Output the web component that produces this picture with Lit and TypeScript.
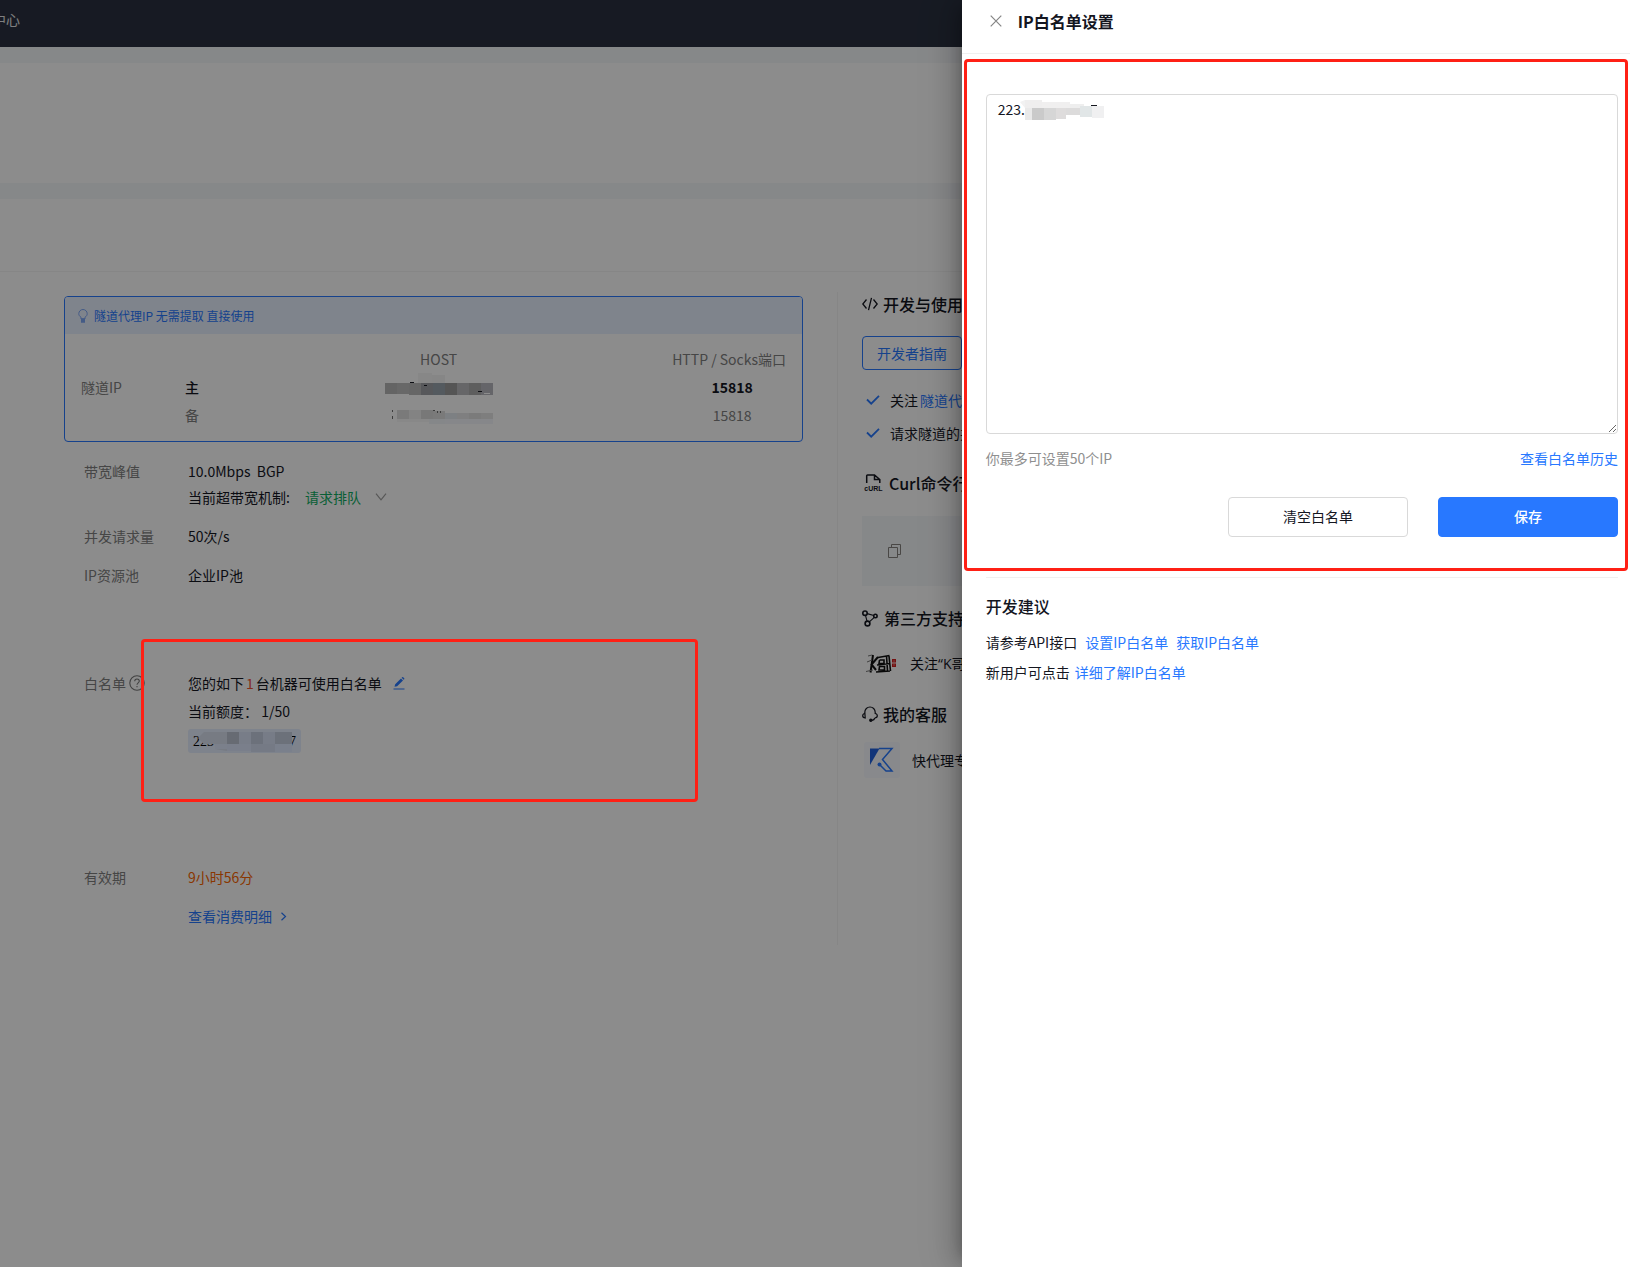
import { LitElement, html, css, svg } from "lit";
import { customElement, state } from "lit/decorators.js";

type Block = [x: number, y: number, w: number, h: number, fill: string];

const blocks = (list: Block[]) =>
  list.map(([x, y, w, h, fill]) => svg`<rect x=${x} y=${y} width=${w} height=${h} fill=${fill}></rect>`);

const PRIMARY_HOST: Block[] = [
  [33, 0, 14, 10, "#878787"],
  [47, 2, 13, 8, "#868686"],
  [0, 10, 12, 11, "#646464"],
  [12, 10, 12, 11, "#686868"],
  [24, 10, 12, 12, "#666666"],
  [36, 10, 12, 12, "#57585b"],
  [48, 10, 12, 12, "#545a5f"],
  [60, 10, 12, 12, "#555555"],
  [72, 10, 12, 12, "#666668"],
  [84, 10, 12, 12, "#5e5e5e"],
  [96, 10, 12, 12, "#656569"],
  [25, 9, 4, 1, "#0c0d12"],
  [39, 12, 3, 1, "#0c0d12"],
  [93, 18, 4, 1, "#0c0d12"],
  [99, 20, 6, 1, "#8c8c8c"],
];

const BACKUP_HOST: Block[] = [
  [7, 9, 1, 2, "#3c3c3c"],
  [7, 15, 1, 3, "#3c3c3c"],
  [12, 9, 12, 9, "#7a7a7a"],
  [24, 9, 12, 9, "#838383"],
  [36, 9, 12, 9, "#787878"],
  [48, 10, 12, 9, "#7a7a7a"],
  [12, 18, 36, 3, "#888888"],
  [60, 12, 12, 6, "#7d8083"],
  [72, 12, 12, 6, "#7f7f80"],
  [84, 12, 12, 6, "#7b7b7b"],
  [96, 12, 12, 6, "#7e7e7e"],
  [44, 18, 20, 5, "#858789"],
  [60, 18, 48, 5, "#86878a"],
  [48, 9, 2, 1, "#3c3c3c"],
  [52, 10, 1, 2, "#3c3c3c"],
  [55, 10, 1, 2, "#3c3c3c"],
];

const CHIP_MASK: Block[] = [
  [16, 3, 23, 12, "#777b83"],
  [39, 3, 12, 12, "#676b73"],
  [51, 3, 12, 12, "#787d88"],
  [63, 3, 12, 12, "#6c717b"],
  [75, 3, 12, 12, "#777c87"],
  [87, 3, 17, 12, "#6c717a"],
  [27, 15, 12, 5, "#7b808b"],
  [39, 15, 24, 7, "#7a7f8b"],
  [63, 15, 24, 8, "#757a85"],
  [87, 15, 17, 8, "#7a808c"],
];

const INPUT_MASK: Block[] = [
  [5, 0, 17, 8, "#efeeee"],
  [22, 2, 28, 6, "#f0efef"],
  [50, 4, 14, 4, "#eeeeee"],
  [5, 8, 7, 12, "#e9e9e9"],
  [12, 8, 12, 12, "#cacaca"],
  [24, 8, 12, 12, "#d6d6d6"],
  [36, 8, 10, 11, "#dedcdc"],
  [46, 8, 14, 7, "#dcdbdb"],
  [60, 6, 12, 11, "#e1e6e7"],
  [72, 6, 12, 12, "#f0f0f1"],
  [71, 5, 6, 1, "#15171f"],
];

@customElement("app-root")
export class AppRoot extends LitElement {
  @state() private whitelist = "223.";

  static styles = css`
    :host {
      display: block;
      min-height: 100vh;
      background: #fff;
      color: #14161f;
      font: 14px/26px "Noto Sans CJK SC", sans-serif;
      --blue: #2878ff;
      --muted: #808080;
      --line: #f0f0f0;
    }
    * { box-sizing: border-box; }
    a { color: var(--blue); text-decoration: none; }
    button { font: inherit; cursor: pointer; }
    svg { display: block; flex: none; }
    h2, p, dl, dd, dt, ul { margin: 0; padding: 0; }

    .page { min-height: 100vh; overflow: hidden; }
    .topbar { display: flex; height: 47px; background: #2a3140; }
    .nav {
      display: flex;
      justify-content: flex-end;
      width: 20px;
      white-space: nowrap;
      line-height: 38px;
      color: #e6e7ea;
    }
    .band { height: 16px; background: #f5f7fa; }
    .summary { height: 120px; }
    .tabs { height: 73px; border-bottom: 1px solid #f5f5f5; }
    .content { display: grid; grid-template-columns: 19fr 18fr; padding-top: 20px; }
    .main { padding: 4px 34px 0 64px; }

    .tunnel { border: 1px solid var(--blue); border-radius: 4px; }
    .banner {
      display: flex;
      align-items: center;
      gap: 6px;
      height: 37px;
      padding: 0 13px;
      background: #e8f0ff;
      color: var(--blue);
      font-size: 12px;
      border-radius: 3px 3px 0 0;
    }
    .hosts {
      width: 100%;
      margin: 11px 0 12px;
      border-collapse: collapse;
      line-height: 28px;
      color: var(--muted);
    }
    .hosts th, .hosts td { height: 28px; padding: 0; font-weight: 400; text-align: center; white-space: nowrap; }
    .hosts td.name { width: 120px; padding-left: 16px; text-align: left; }
    .hosts td.role { width: 20px; text-align: left; }
    .hosts .port { width: 125px; padding-right: 16px; }
    .hosts td.port { padding-right: 10px; }
    .hosts .active { color: #14161f; font-weight: 500; }
    .hosts td.port.active { font-weight: 700; }
    .mosaic { position: relative; z-index: 3; margin: 0 auto; }

    .details { display: grid; row-gap: 13px; padding: 16px 0 0 20px; }
    .row { display: grid; grid-template-columns: 104px 1fr; }
    .row dt { display: flex; align-items: center; gap: 3px; height: 26px; color: var(--muted); }
    .inline { display: flex; align-items: center; white-space: pre; }
    .green { margin-left: 15px; color: #0fae63; }
    .drop { padding: 0; margin-left: 14px; border: 0; background: none; }
    .count { margin: 0 2px; color: #f05030; }
    .icon-btn { padding: 0; margin-left: 11px; border: 0; background: none; }
    .orange { color: #fa6400; }
    .more { display: flex; align-items: center; gap: 8px; }

    .marked { position: relative; padding: 69px 0 98px; }
    .frame {
      position: absolute;
      z-index: 3;
      border: 3px solid #ff2015;
      border-radius: 4px;
      pointer-events: none;
    }
    .frame-row { top: 38px; bottom: 49px; left: 57px; right: 105px; }
    .quota { margin-top: 2px; }
    .chip {
      position: relative;
      width: 113px;
      height: 24px;
      margin-top: 5px;
      padding: 0 5px;
      display: flex;
      justify-content: space-between;
      border-radius: 3px;
      background: #e6eeff;
      color: #000;
      font: 14px/25px "Liberation Serif", serif;
    }
    .chip .mosaic { position: absolute; inset: 0; }

    .aside { min-height: 653px; padding-left: 24px; border-left: 1px solid #f5f5f5; white-space: nowrap; }
    .aside h2 { display: flex; align-items: center; gap: 5px; height: 24px; font-size: 16px; font-weight: 500; }
    .guide {
      width: 100px;
      height: 34px;
      margin-top: 20px;
      display: flex;
      align-items: center;
      justify-content: center;
      border: 1px solid var(--blue);
      border-radius: 4px;
    }
    .tips { padding-top: 13px; list-style: none; }
    .tips li { display: flex; align-items: center; height: 33px; padding-left: 4px; }
    .tips svg { margin-right: 10px; }
    .tips a { margin-left: 2px; }
    .aside .curl { margin-top: 22px; padding-left: 2px; gap: 6px; }
    .code { display: flex; align-items: center; height: 70px; margin-top: 21px; padding-left: 26px; background: #f5f7fa; }
    .copy { padding: 0; border: 0; background: none; }
    .aside .third { margin-top: 20px; gap: 6px; }
    .person { display: flex; align-items: center; gap: 12px; height: 36px; padding-left: 2px; }
    .brother { margin: 16px 0 20px; font-family: "Open Sans", "Noto Sans CJK SC", sans-serif; }
    .agent { margin-top: 16px; }

    .mask { position: fixed; z-index: 2; inset: 0; background: rgba(0, 0, 0, 0.45); }

    .drawer {
      position: fixed;
      z-index: 4;
      top: 0;
      right: 0;
      bottom: 0;
      width: 41%;
      overflow: auto;
      background: #fff;
      line-height: 22px;
    }
    .shade {
      position: fixed;
      z-index: 2;
      top: 0;
      right: 0;
      bottom: 0;
      width: 41%;
      box-shadow: -6px 0 16px -8px rgba(0, 0, 0, 0.32), -9px 0 28px 0 rgba(0, 0, 0, 0.2),
        -12px 0 48px 16px rgba(0, 0, 0, 0.03);
    }
    .drawer-head {
      display: flex;
      align-items: center;
      gap: 12px;
      height: 54px;
      padding: 0 24px 12px;
      border-bottom: 1px solid var(--line);
    }
    .drawer-head h2 { font-size: 16px; font-weight: 700; }
    .close { display: flex; align-items: center; justify-content: center; width: 20px; height: 20px; padding: 0; border: 0; background: none; }
    .form { position: relative; padding: 40px 12px 40px 24px; }
    .frame-form { top: 5px; bottom: 6px; left: 2px; right: 2px; }
    .field { position: relative; }
    .ips {
      display: block;
      width: 100%;
      height: 340px;
      padding: 3px 11px;
      border: 1px solid #d9d9d9;
      border-radius: 4px;
      color: inherit;
      font: inherit;
      outline: 0;
      resize: vertical;
    }
    .field .mosaic { position: absolute; top: 6px; left: 34px; pointer-events: none; }
    .note { display: flex; justify-content: space-between; margin-top: 13px; color: #8f8f8f; }
    .actions { display: flex; justify-content: flex-end; gap: 30px; margin-top: 28px; }
    .btn {
      width: 180px;
      height: 40px;
      padding: 0 0 2px;
      border: 1px solid #d9d9d9;
      border-radius: 4px;
      background: #fff;
      color: inherit;
    }
    .primary { border-color: var(--blue); background: var(--blue); color: #fff; font-weight: 500; }
    .advice { margin: 0 12px 0 24px; padding-top: 16px; border-top: 1px solid var(--line); line-height: 30px; }
    .advice h2 { margin-bottom: 9px; font-size: 16px; font-weight: 500; line-height: 24px; }
    .advice p { display: flex; gap: 8px; }
    .advice .tight { gap: 5px; }
  `;

  private check() {
    return html`<svg width="14" height="12" viewBox="0 0 14 12" fill="none" stroke="#2878ff" stroke-width="1.800">
      <path d="M1 5.500 5.200 9.700 13 1.800"></path>
    </svg>`;
  }

  private tunnel() {
    return html`<section class="tunnel">
      <div class="banner">
        <svg width="10" height="14" viewBox="0 0 10 14" fill="none" stroke="#7da6f5" stroke-width="1">
          <path d="M3 10V8.200C1.600 7.400.8 6.200.8 4.700A4.200 4.200 0 0 1 9.200 4.700C9.200 6.200 8.400 7.400 7 8.200V10Z"></path>
          <path d="M3 11.500H7M3 13H7M3 10H7" stroke-width="1.300"></path>
        </svg>
        <span>隧道代理IP 无需提取 直接使用</span>
      </div>
      <table class="hosts">
        <tr>
          <td class="name"></td>
          <td class="role"></td>
          <th scope="col">HOST</th>
          <th scope="col" class="port">HTTP / Socks端口</th>
        </tr>
        <tr>
          <td class="name">隧道IP</td>
          <td class="role active">主</td>
          <td><svg class="mosaic" width="108" height="28" viewBox="0 0 108 28">${blocks(PRIMARY_HOST)}</svg></td>
          <td class="port active">15818</td>
        </tr>
        <tr>
          <td class="name"></td>
          <td class="role">备</td>
          <td><svg class="mosaic" width="108" height="28" viewBox="0 0 108 28">${blocks(BACKUP_HOST)}</svg></td>
          <td class="port">15818</td>
        </tr>
      </table>
    </section>`;
  }

  private details() {
    return html`<dl class="details">
      <div class="row">
        <dt>带宽峰值</dt>
        <dd>
          <div class="inline">10.0Mbps  BGP</div>
          <div class="inline">当前超带宽机制:<span class="green">请求排队</span><button class="drop" aria-label="展开"><svg width="12" height="8" viewBox="0 0 12 8" fill="none" stroke="#a0a0a0" stroke-width="1.200"><path d="M1 .6 6 6.800 11 .6"></path></svg></button></div>
        </dd>
      </div>
      <div class="row"><dt>并发请求量</dt><dd>50次/s</dd></div>
      <div class="row"><dt>IP资源池</dt><dd>企业IP池</dd></div>
      <div class="row marked">
        <dt>
          白名单
          <svg width="16" height="16" viewBox="0 0 16 16" fill="none" stroke="#777" stroke-width="1.100">
            <circle cx="8" cy="8" r="7.200"></circle>
            <path d="M5.700 6.300C5.700 3.200 10.300 3.200 10.300 6.100 10.300 7.800 8 8 8 9.800M8 11V12.200"></path>
          </svg>
        </dt>
        <dd>
          <div class="inline">您的如下<span class="count">1</span>台机器可使用白名单<button class="icon-btn" aria-label="编辑"><svg width="12" height="13" viewBox="0 0 12 13" fill="#2878ff"><path d="M1.500 9.800 2.200 7.200 8 1.400 10 3.400 4.100 9.200ZM8.600.8 9.200.2Q9.700-.2 10.200.3L11.200 1.300Q11.600 1.800 11.200 2.200L10.600 2.800Z"></path><path d="M.5 11.500H11.500V12.500H.5Z"></path></svg></button></div>
          <div class="inline quota">当前额度： 1/50</div>
          <div class="chip"><span>223</span><span>7</span><svg class="mosaic" width="113" height="24" viewBox="0 0 113 24"><path d="M10 9 16 3V15H20L27 15V20L39 22V15H16Z" fill="#777b83"></path>${blocks(CHIP_MASK)}</svg></div>
        </dd>
        <span class="frame frame-row"></span>
      </div>
      <div class="row">
        <dt>有效期</dt>
        <dd class="orange">9小时56分</dd>
      </div>
      <div class="row">
        <dt></dt>
        <dd>
          <a class="more" href="#">查看消费明细<svg width="7" height="9" viewBox="0 0 7 9" fill="none" stroke="#2878ff" stroke-width="1.200"><path d="M1.500.7 5.500 4.500 1.500 8.300"></path></svg></a>
        </dd>
      </div>
    </dl>`;
  }

  private aside() {
    return html`<aside class="aside">
      <h2>
        <svg width="16" height="14" viewBox="0 0 16 14" fill="none" stroke="#14161f" stroke-width="1.300">
          <path d="M4.500 2.500.8 7 4.500 11.500M11.500 2.500 15.200 7 11.500 11.500M9.500.8 6.500 13.200"></path>
        </svg>
        开发与使用
      </h2>
      <a class="guide" href="#">开发者指南</a>
      <ul class="tips">
        <li>${this.check()}关注<a href="#">隧道代</a></li>
        <li>${this.check()}请求隧道的并</li>
      </ul>
      <h2 class="curl">
        <svg width="19" height="18" viewBox="0 0 19 18" fill="none" stroke="#14161f" stroke-width="1.500">
          <path d="M2.700 9V1.800Q2.700 1 3.500 1H10.500L15.800 5.500V9M10.500 1V5.500H15.800"></path>
          <text x="9.500" y="17" text-anchor="middle" font-family="Liberation Sans" font-size="7" font-weight="700" fill="#14161f" stroke="none">cURL</text>
        </svg>
        Curl命令行
      </h2>
      <div class="code">
        <button class="copy" aria-label="复制">
          <svg width="13" height="14" viewBox="0 0 13 14" fill="none" stroke="#85827e">
            <path d="M.5 3.500H9.500V13.500H.5ZM3.500 3.500V.5H12.500V10.500H9.500"></path>
          </svg>
        </button>
      </div>
      <h2 class="third">
        <svg width="16" height="17" viewBox="0 0 16 17" fill="none" stroke="#14161f" stroke-width="1.600">
          <circle cx="3" cy="3.200" r="2.200"></circle>
          <circle cx="13.400" cy="6" r="1.700"></circle>
          <circle cx="5.500" cy="13.500" r="2.400"></circle>
          <path d="M5.200 3.600 11.800 5.500M3.500 5.400 5 11.200M12.300 7.400 7.300 11.900" stroke-width="1.100"></path>
        </svg>
        第三方支持
      </h2>
      <div class="person brother">
        <svg width="34" height="22" viewBox="0 0 34 22" fill="none" stroke="#101010">
          <path d="M9 2 6.500 19.500M14 4 7.500 11.500 12 17" stroke-width="2"></path>
          <path d="M14 4.500 25.500 2.500M15.500 7H20V10.500H15L15.500 7M13 12 26 10.500M15.500 13.500H20.500V17H15ZM22.500 3 23.500 17.500M25 3 26.500 18M12 19 26 18" stroke-width="1.600"></path>
          <path d="M3 9 8 7M2 18.500 9 17M4 3 8 2" stroke="#777" stroke-width="1"></path>
          <path d="M28 6H32V9.500H28ZM28 10.500H32V14H28Z" fill="#d32020" stroke="none"></path>
          <path d="M29 8H31M29 12H31" stroke="#f0a0a0" stroke-width=".7"></path>
        </svg>
        关注“K哥
      </div>
      <h2>
        <svg width="16" height="16" viewBox="0 0 16 16" fill="none" stroke="#14161f" stroke-width="1.200">
          <path d="M2.800 8V6.200A5.200 5.200 0 0 1 13.200 6.200V8M2.900 7.500Q.7 7.800.7 9.800T3.200 12ZM13.100 7.500Q15.300 7.800 15.300 9.800T12.800 12M12.800 12Q12.300 14 10 14.300"></path>
          <circle cx="8.800" cy="14.300" r="1.100" fill="#14161f"></circle>
        </svg>
        我的客服
      </h2>
      <div class="person agent">
        <svg width="36" height="36" viewBox="0 0 36 36">
          <rect width="36" height="36" rx="3" fill="#f8faff"></rect>
          <path d="M6 6.500H15.500L6 23Z" fill="#2060dc"></path>
          <path d="M15 6.500H28L18.500 17.500 28 29H22L16 23" fill="none" stroke="#2878ff" stroke-width="1.500"></path>
          <circle cx="15.500" cy="22.500" r="2" fill="#2878ff"></circle>
        </svg>
        快代理专
      </div>
    </aside>`;
  }

  private drawer() {
    return html`<section class="drawer" role="dialog" aria-labelledby="title">
      <header class="drawer-head">
        <button class="close" aria-label="关闭">
          <svg width="12" height="12" viewBox="0 0 12 12" fill="none" stroke="#858585" stroke-width="1.200">
            <path d="M.7.7 11.300 11.300M11.300.7.7 11.300"></path>
          </svg>
        </button>
        <h2 id="title"><label for="ips">IP白名单设置</label></h2>
      </header>
      <div class="form">
        <div class="field">
          <textarea
            id="ips"
            class="ips"
            spellcheck="false"
            .value=${this.whitelist}
            @input=${(e: Event) => (this.whitelist = (e.target as HTMLTextAreaElement).value)}
          ></textarea>
          <svg class="mosaic" width="84" height="20" viewBox="0 0 84 20"><path d="M0 2 5 0V8Z" fill="#f2f2f2"></path>${blocks(INPUT_MASK)}</svg>
        </div>
        <div class="note"><span>你最多可设置50个IP</span><a href="#">查看白名单历史</a></div>
        <div class="actions">
          <button class="btn" @click=${() => (this.whitelist = "")}>清空白名单</button>
          <button class="btn primary">保存</button>
        </div>
        <span class="frame frame-form"></span>
      </div>
      <div class="advice">
        <h2>开发建议</h2>
        <p>请参考API接口<a href="#">设置IP白名单</a><a href="#">获取IP白名单</a></p>
        <p class="tight">新用户可点击<a href="#">详细了解IP白名单</a></p>
      </div>
    </section>`;
  }

  render() {
    return html`
      <div class="page">
        <header class="topbar"><a class="nav" href="#">中心</a></header>
        <div class="band"></div>
        <div class="summary"></div>
        <div class="band"></div>
        <div class="tabs"></div>
        <div class="content">
          <main class="main">${this.tunnel()}${this.details()}</main>
          ${this.aside()}
        </div>
      </div>
      <div class="mask"></div>
      <div class="shade"></div>
      ${this.drawer()}
    `;
  }
}
